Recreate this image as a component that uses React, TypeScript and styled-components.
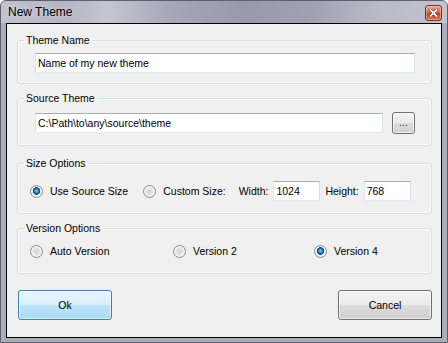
import React from "react";
import styled, { createGlobalStyle } from "styled-components";

const Global = createGlobalStyle`
    html, body {
        margin: 0;
        padding: 0;
        background: #fff;
    }
    body {
        font-family: "Liberation Sans", Arial, sans-serif;
    }
`;

const Frame = styled.div`
    width: 448px;
    height: 343px;
    box-sizing: border-box;
    border: 1px solid #5e5f70;
    border-radius: 6px 6px 0 0;
    background: #acadbc;
    display: flex;
    flex-direction: column;
    overflow: hidden;
`;

const TitleBar = styled.div`
    height: 22px;
    flex: none;
    display: flex;
    align-items: center;
    justify-content: space-between;
    padding: 0 5px 0 7px;
    background: linear-gradient(
        90deg,
        #c3c3cf 0%,
        #b4b4c3 14%,
        #c6c6d2 24%,
        #a6a6b7 38%,
        #9899ab 55%,
        #a1a1b2 70%,
        #bbbbc8 85%,
        #c3c3cf 100%
    );
`;

const Title = styled.span`
    font-size: 12px;
    color: #000;
    text-shadow: 0 0 6px rgba(255, 255, 255, 0.7);
`;

const CloseButton = styled.button`
    width: 17px;
    height: 16px;
    margin-top: 2px;
    padding: 0;
    box-sizing: border-box;
    border: 1px solid #6e3327;
    border-radius: 3px;
    background: linear-gradient(#eaa995 0%, #d5664a 48%, #c3411f 52%, #d97655 100%);
    box-shadow: inset 0 0 0 1px rgba(255, 220, 200, 0.45);
    display: flex;
    align-items: center;
    justify-content: center;
`;

const Client = styled.div`
    flex: 1;
    margin: 0 5px 4px 5px;
    border: 1px solid #000;
    background: #f0f0f0;
    padding: 9px 9px 0 10px;
    display: flex;
    flex-direction: column;
`;

const Group = styled.fieldset<{ $mt?: number }>`
    margin: ${(p) => p.$mt ?? 0}px 0 0 0;
    padding: 0;
    border: 1px solid #d5dfe5;
    border-radius: 3px;
    box-shadow: inset 0 0 0 1px #fbfbfb;
    min-width: 0;
`;

const Legend = styled.legend`
    margin-left: 6px;
    padding: 0 2px;
    font-size: 10.5px;
    line-height: 14px;
    color: #000;
`;

const GroupBody = styled.div<{ $pt: number; $pb: number; $pl?: number; $pr?: number }>`
    padding: ${(p) => p.$pt}px ${(p) => p.$pr ?? 16}px ${(p) => p.$pb}px
        ${(p) => p.$pl ?? 17}px;
    display: flex;
    align-items: center;
`;

const TextBox = styled.input<{ $w?: number }>`
    height: 20px;
    box-sizing: border-box;
    ${(p) => (p.$w ? `width: ${p.$w}px; flex: none;` : "flex: 1; min-width: 0;")}
    border: 1px solid;
    border-color: #abadb3 #dbdfe6 #e3e9ef #e2e3ea;
    background: #fff;
    padding: 0 2px;
    font-family: "Liberation Sans", Arial, sans-serif;
    font-size: 10.5px;
    color: #000;
    outline: none;
`;

const BrowseButton = styled.button`
    width: 23px;
    height: 22px;
    margin-left: 9px;
    flex: none;
    padding: 0 0 2px 0;
    box-sizing: border-box;
    border: 1px solid #707070;
    border-radius: 3px;
    background: linear-gradient(#f2f2f2 0%, #ebebeb 50%, #dddddd 50%, #cfcfcf 100%);
    box-shadow: inset 0 0 0 1px rgba(255, 255, 255, 0.7);
    font-family: "Liberation Sans", Arial, sans-serif;
    font-size: 10.5px;
    color: #4a1a5a;
`;

const Option = styled.label<{ $mr?: number }>`
    display: flex;
    align-items: center;
    gap: 7px;
    margin-right: ${(p) => p.$mr ?? 0}px;
    font-size: 10.5px;
    line-height: 16px;
    color: #000;
    white-space: nowrap;
`;

const Radio = styled.input.attrs({ type: "radio" })`
    appearance: none;
    margin: 0;
    width: 13px;
    height: 13px;
    flex: none;
    box-sizing: border-box;
    border-radius: 50%;
    border: 1px solid #8a8b8c;
    box-shadow: inset 0 0 0 1px #f4f4f4;
    background: radial-gradient(circle at 50% 50%, #cfcfcf 0, #e4e4e4 3px, #f5f5f5 5px, #e2e2e2 6px);

    &:checked {
        background: radial-gradient(
                circle at 50% 45%,
                #8fdcff 0,
                #2f95d4 1.6px,
                #135699 3px,
                #1b3a60 3.6px,
                transparent 4px
            ),
            radial-gradient(circle at 50% 50%, #cfcfcf 0, #e4e4e4 3px, #f5f5f5 5px, #e2e2e2 6px);
    }
`;

const FieldLabel = styled.span<{ $ml?: number }>`
    margin-left: ${(p) => p.$ml ?? 0}px;
    margin-right: 5px;
    font-size: 10.5px;
    color: #000;
    white-space: nowrap;
`;

const VersionGrid = styled.div`
    display: grid;
    grid-template-columns: 143px 141px auto;
    align-items: center;
    padding: 8px 16px 14px 12px;
`;

const ButtonRow = styled.div`
    margin-top: 16px;
    padding-left: 1px;
    display: flex;
    justify-content: space-between;
`;

const DialogButton = styled.button<{ $default?: boolean }>`
    width: 94px;
    height: 30px;
    box-sizing: border-box;
    border-radius: 3px;
    border: 1px solid ${(p) => (p.$default ? "#3c7fb1" : "#707070")};
    background: ${(p) =>
        p.$default
            ? "linear-gradient(#e9f6fd 0%, #d8effc 50%, #bfe5fa 50%, #a9daf5 100%)"
            : "linear-gradient(#f2f2f2 0%, #ebebeb 50%, #dddddd 50%, #cfcfcf 100%)"};
    box-shadow: inset 0 0 0 1px rgba(255, 255, 255, 0.6);
    font-family: "Liberation Sans", Arial, sans-serif;
    font-size: 10.5px;
    color: #000;
`;

export default function App() {
    return (
        <>
            <Global />
            <Frame>
                <TitleBar>
                    <Title>New Theme</Title>
                    <CloseButton type="button" aria-label="Close">
                        <svg width="9" height="8" viewBox="0 0 9 8">
                            <path
                                d="M1.5 1 L7.5 7 M7.5 1 L1.5 7"
                                stroke="#5a2418"
                                strokeWidth="3"
                                strokeLinecap="square"
                            />
                            <path
                                d="M1.5 1 L7.5 7 M7.5 1 L1.5 7"
                                stroke="#fff"
                                strokeWidth="1.8"
                                strokeLinecap="square"
                            />
                        </svg>
                    </CloseButton>
                </TitleBar>
                <Client>
                    <Group>
                        <Legend>Theme Name</Legend>
                        <GroupBody $pt={6} $pb={10}>
                            <TextBox defaultValue="Name of my new theme" />
                        </GroupBody>
                    </Group>

                    <Group $mt={7}>
                        <Legend>Source Theme</Legend>
                        <GroupBody $pt={7} $pb={11}>
                            <TextBox defaultValue="C:\Path\to\any\source\theme" />
                            <BrowseButton type="button">...</BrowseButton>
                        </GroupBody>
                    </Group>

                    <Group $mt={10}>
                        <Legend>Size Options</Legend>
                        <GroupBody $pt={11} $pb={12} $pl={12} $pr={18}>
                            <Option $mr={15}>
                                <Radio name="size" defaultChecked />
                                Use Source Size
                            </Option>
                            <Option>
                                <Radio name="size" />
                                Custom Size:
                            </Option>
                            <FieldLabel $ml={13}>Width:</FieldLabel>
                            <TextBox $w={47} defaultValue="1024" />
                            <FieldLabel $ml={5}>Height:</FieldLabel>
                            <TextBox $w={47} defaultValue="768" />
                        </GroupBody>
                    </Group>

                    <Group $mt={7}>
                        <Legend>Version Options</Legend>
                        <VersionGrid>
                            <Option>
                                <Radio name="version" />
                                Auto Version
                            </Option>
                            <Option>
                                <Radio name="version" />
                                Version 2
                            </Option>
                            <Option>
                                <Radio name="version" defaultChecked />
                                Version 4
                            </Option>
                        </VersionGrid>
                    </Group>

                    <ButtonRow>
                        <DialogButton type="button" $default>
                            Ok
                        </DialogButton>
                        <DialogButton type="button">Cancel</DialogButton>
                    </ButtonRow>
                </Client>
            </Frame>
        </>
    );
}
